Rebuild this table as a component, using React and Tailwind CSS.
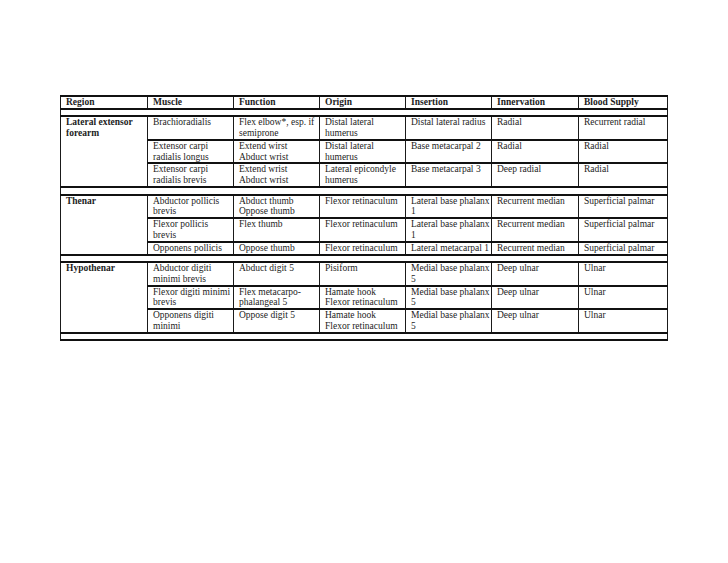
import React from 'react';

const widths = [87, 86, 86, 86, 86, 87, 89];
const headers = ['Region', 'Muscle', 'Function', 'Origin', 'Insertion', 'Innervation', 'Blood Supply'];

const groups = [
  {
    region: ['Lateral extensor', 'forearm'],
    rows: [
      [['Brachioradialis'], ['Flex elbow*, esp. if', 'semiprone'], ['Distal lateral', 'humerus'], ['Distal lateral radius'], ['Radial'], ['Recurrent radial']],
      [['Extensor carpi', 'radialis longus'], ['Extend wirst', 'Abduct wrist'], ['Distal lateral', 'humerus'], ['Base metacarpal 2'], ['Radial'], ['Radial']],
      [['Extensor carpi', 'radialis brevis'], ['Extend wrist', 'Abduct wrist'], ['Lateral epicondyle', 'humerus'], ['Base metacarpal 3'], ['Deep radial'], ['Radial']],
    ],
  },
  {
    region: ['Thenar'],
    rows: [
      [['Abductor pollicis', 'brevis'], ['Abduct thumb', 'Oppose thumb'], ['Flexor retinaculum'], ['Lateral base phalanx', '1'], ['Recurrent median'], ['Superficial palmar']],
      [['Flexor pollicis', 'brevis'], ['Flex thumb'], ['Flexor retinaculum'], ['Lateral base phalanx', '1'], ['Recurrent median'], ['Superficial palmar']],
      [['Opponens pollicis'], ['Oppose thumb'], ['Flexor retinaculum'], ['Lateral metacarpal 1'], ['Recurrent median'], ['Superficial palmar']],
    ],
  },
  {
    region: ['Hypothenar'],
    rows: [
      [['Abductor digiti', 'minimi brevis'], ['Abduct digit 5'], ['Pisiform'], ['Medial base phalanx', '5'], ['Deep ulnar'], ['Ulnar']],
      [['Flexor digiti minimi', 'brevis'], ['Flex metacarpo-', 'phalangeal 5'], ['Hamate hook', 'Flexor retinaculum'], ['Medial base phalanx', '5'], ['Deep ulnar'], ['Ulnar']],
      [['Opponens digiti', 'minimi'], ['Oppose digit 5'], ['Hamate hook', 'Flexor retinaculum'], ['Medial base phalanx', '5'], ['Deep ulnar'], ['Ulnar']],
    ],
  },
];

const cell = 'border-x border-x-[#1a1a1a] border-y-2 border-y-[#111] px-[5px] py-0 align-top text-left';

function Lines({ lines }) {
  return lines.map((l, i) => (
    <div key={i} className="whitespace-nowrap">{l}</div>
  ));
}

function BlankRow() {
  return (
    <tr>
      <td colSpan={7} className="border-x border-x-[#1a1a1a] border-y-2 border-y-[#111] p-0 h-[7.5px]" />
    </tr>
  );
}

export default function App() {
  return (
    <div className="bg-white w-[728px] h-[563px] pt-[95px] pl-[60px]">
      <table
        className="table-fixed border-collapse text-[9.5px] leading-[10.8px] text-[#1c1c1c]"
        style={{ width: 607, fontFamily: '"Liberation Serif", "Times New Roman", serif' }}
      >
        <colgroup>
          {widths.map((w, i) => (
            <col key={i} style={{ width: w }} />
          ))}
        </colgroup>
        <tbody>
          <tr>
            {headers.map((h) => (
              <th key={h} className="border-x border-x-[#1a1a1a] border-t-2 border-t-[#111] border-b border-b-[#111] px-[5px] py-0 text-left font-bold align-top">
                {h}
              </th>
            ))}
          </tr>
          <BlankRow />
          {groups.map((g, gi) => (
            <React.Fragment key={gi}>
              {g.rows.map((r, ri) => (
                <tr key={ri}>
                  {ri === 0 && (
                    <td rowSpan={g.rows.length} className={cell + ' font-bold'}>
                      <Lines lines={g.region} />
                    </td>
                  )}
                  {r.map((c, ci) => (
                    <td key={ci} className={cell}>
                      <Lines lines={c} />
                    </td>
                  ))}
                </tr>
              ))}
              <BlankRow />
            </React.Fragment>
          ))}
        </tbody>
      </table>
    </div>
  );
}
